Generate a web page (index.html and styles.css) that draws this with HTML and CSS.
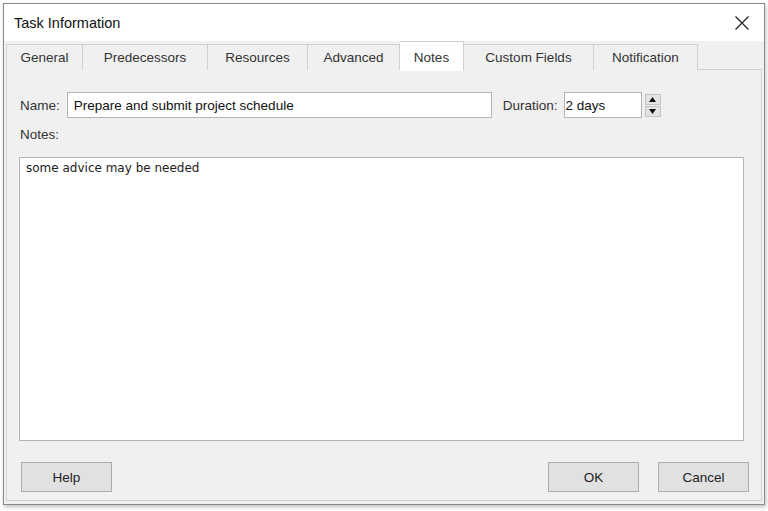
FILE: index.html
```html
<!DOCTYPE html>
<html>
<head>
<meta charset="utf-8">
<link rel="stylesheet" href="styles.css">
</head>
<body>
<div class="window">
  <div class="titlebar">
    <span class="title">Task Information</span>
    <span class="close"><svg width="16" height="16" viewBox="0 0 16 16"><path d="M1.5 1.5 L14.5 14.5 M14.5 1.5 L1.5 14.5" stroke="#222" stroke-width="1.2" fill="none"/></svg></span>
  </div>
  <div class="client">
    <div class="tabs">
      <div class="tab w-general">General</div>
      <div class="tab w-pred">Predecessors</div>
      <div class="tab w-res">Resources</div>
      <div class="tab w-adv">Advanced</div>
      <div class="tab w-notes active">Notes</div>
      <div class="tab w-custom">Custom Fields</div>
      <div class="tab w-notif">Notification</div>
    </div>
    <div class="panel">
      <div class="row">
        <span class="label">Name:</span>
        <div class="input name-input">Prepare and submit project schedule</div>
        <span class="label dur-label">Duration:</span>
        <div class="input dur-input">2 days</div>
        <div class="spinner">
          <div class="spin"><svg width="7" height="5" viewBox="0 0 7 5"><path d="M3.5 0 L7 5 L0 5 Z" fill="#111"/></svg></div>
          <div class="spin"><svg width="7" height="5" viewBox="0 0 7 5"><path d="M0 0 L7 0 L3.5 5 Z" fill="#111"/></svg></div>
        </div>
      </div>
      <div class="label notes-label">Notes:</div>
      <div class="notes">some advice may be needed</div>
      <div class="buttons">
        <div class="btn">Help</div>
        <div class="spacer"></div>
        <div class="btn">OK</div>
        <div class="btn">Cancel</div>
      </div>
    </div>
  </div>
</div>
</body>
</html>
```
FILE: styles.css
```css
* { box-sizing: border-box; }
html, body { margin: 0; padding: 0; background: #ffffff; }
body {
  font-family: "Liberation Sans", Arial, sans-serif;
  font-size: 13.5px;
  color: #333;
  width: 768px;
  height: 511px;
  overflow: hidden;
}
.window {
  margin: 3px 0 0 3px;
  width: 762px;
  height: 502px;
  border: 1px solid #8a8a8a;
  background: #f0f0f0;
  box-shadow: 1px 2px 4px rgba(0,0,0,0.25);
  display: flex;
  flex-direction: column;
}
.titlebar {
  height: 37px;
  background: #ffffff;
  display: flex;
  align-items: center;
  justify-content: space-between;
  padding: 0 14px 0 10px;
  flex: none;
}
.title { font-size: 14.5px; color: #111; padding-top: 0; }
.close { display: flex; width: 16px; height: 16px; }
.client {
  flex: 1;
  padding: 3px 2px 3px 2px;
  display: flex;
  flex-direction: column;
}
.tabs {
  display: flex;
  height: 25px;
  flex: none;
  position: relative;
  z-index: 1;
}
.tab {
  height: 26px;
  border: 1px solid #d0d0d0;
  border-left: none;
  border-bottom: none;
  background: #f0f0f0;
  display: flex;
  align-items: center;
  justify-content: center;
  color: #333;
  padding-bottom: 1px;
}
.tab:first-child { border-left: 1px solid #d0d0d0; }
.tab.active {
  background: #ffffff;
  height: 30px;
  margin-top: -3px;
  padding-bottom: 0;
  padding-top: 1px;
  position: relative;
}
.w-general { width: 77px; }
.w-pred { width: 125px; }
.w-res { width: 100px; }
.w-adv { width: 92px; }
.w-notes { width: 64px; }
.w-custom { width: 130px; }
.w-notif { width: 104px; }
.panel {
  flex: 1;
  border: 1px solid #d0d0d0;
  display: flex;
  flex-direction: column;
  padding: 22px 12px 8px 12px;
}
.row {
  display: flex;
  align-items: center;
  height: 26px;
  padding-left: 1px;
}
.label { color: #333; }
.input {
  height: 26px;
  background: #fff;
  border: 1px solid #b4b4b4;
  display: flex;
  align-items: center;
  padding: 0 6px;
  color: #111;
}
.name-input { width: 425px; margin-left: 7px; }
.dur-label { margin-left: 11px; }
.dur-input { width: 78px; margin-left: 6px; padding-left: 1px; }
.spinner {
  display: flex;
  flex-direction: column;
  gap: 1px;
  margin-left: 3px;
}
.spin {
  width: 16px;
  height: 11px;
  background: #e3e3e3;
  border: 1px solid #c4c4c4;
  display: flex;
  align-items: center;
  justify-content: center;
}
.notes-label { margin-top: 7px; padding-left: 1px; height: 20px; line-height: 20px; }
.notes {
  margin-top: 12px;
  height: 284px;
  width: 725px;
  background: #fff;
  border: 1px solid #b4b4b4;
  font-family: "DejaVu Sans", Verdana, sans-serif;
  font-size: 12px;
  color: #222;
  padding: 3px 6px;
}
.buttons {
  display: flex;
  margin-top: 21px;
  padding-left: 2px;
}
.spacer { flex: 1; }
.btn {
  width: 91px;
  height: 30px;
  background: #e1e1e1;
  border: 1px solid #adadad;
  display: flex;
  align-items: center;
  justify-content: center;
  color: #222;
}
.btn + .btn { margin-left: 19px; }
.spacer + .btn { margin-left: 0; }
```
